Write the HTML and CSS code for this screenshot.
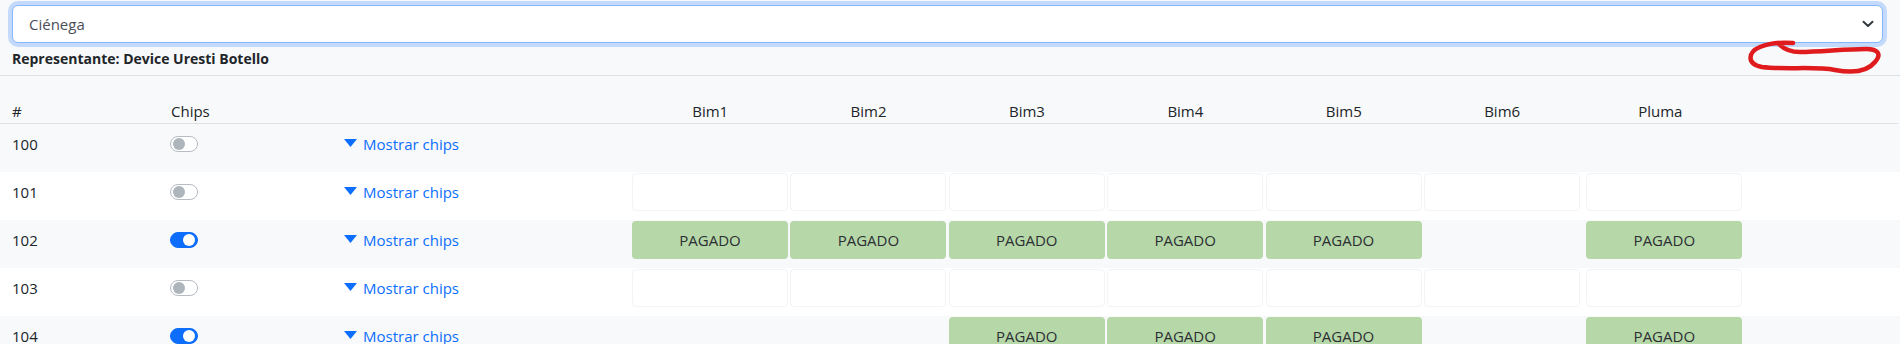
FILE: index.html
```html
<!DOCTYPE html>
<html lang="es">
<head>
<meta charset="utf-8">
<title>Chips</title>
<link rel="stylesheet" href="styles.css">
</head>
<body>
<div class="page">
  <div class="top">
    <div class="select">
      <span class="select-text">Ciénega</span>
      <svg class="chevron" width="12" height="8" viewBox="0 0 12 8"><path d="M1.5 1.8 L6 6 L10.5 1.8" fill="none" stroke="#343a40" stroke-width="2" stroke-linecap="round" stroke-linejoin="round"/></svg>
    </div>
    <div class="rep">Representante: Device Uresti Botello</div>
  </div>

  <div class="table">
    <div class="row head">
      <div class="c-num">#</div>
      <div class="c-chips">Chips</div>
      <div class="c-show"></div>
      <div class="c-bim">Bim1</div>
      <div class="c-bim">Bim2</div>
      <div class="c-bim">Bim3</div>
      <div class="c-bim">Bim4</div>
      <div class="c-bim">Bim5</div>
      <div class="c-bim">Bim6</div>
      <div class="c-pluma">Pluma</div>
    </div>

    <div class="row striped">
      <div class="c-num">100</div>
      <div class="c-chips"><span class="switch"></span></div>
      <div class="c-show"><span class="link"><svg class="caret" width="13" height="8" viewBox="0 0 13 8"><path d="M0 0 H13 L6.5 8 Z" fill="#0d6efd"/></svg>Mostrar chips</span></div>
    </div>

    <div class="row">
      <div class="c-num">101</div>
      <div class="c-chips"><span class="switch"></span></div>
      <div class="c-show"><span class="link"><svg class="caret" width="13" height="8" viewBox="0 0 13 8"><path d="M0 0 H13 L6.5 8 Z" fill="#0d6efd"/></svg>Mostrar chips</span></div>
      <div class="c-bim"><div class="cell empty"></div></div>
      <div class="c-bim"><div class="cell empty"></div></div>
      <div class="c-bim"><div class="cell empty"></div></div>
      <div class="c-bim"><div class="cell empty"></div></div>
      <div class="c-bim"><div class="cell empty"></div></div>
      <div class="c-bim"><div class="cell empty"></div></div>
      <div class="c-pluma"><div class="cell empty"></div></div>
    </div>

    <div class="row striped">
      <div class="c-num">102</div>
      <div class="c-chips"><span class="switch on"></span></div>
      <div class="c-show"><span class="link"><svg class="caret" width="13" height="8" viewBox="0 0 13 8"><path d="M0 0 H13 L6.5 8 Z" fill="#0d6efd"/></svg>Mostrar chips</span></div>
      <div class="c-bim"><div class="cell paid">PAGADO</div></div>
      <div class="c-bim"><div class="cell paid">PAGADO</div></div>
      <div class="c-bim"><div class="cell paid">PAGADO</div></div>
      <div class="c-bim"><div class="cell paid">PAGADO</div></div>
      <div class="c-bim"><div class="cell paid">PAGADO</div></div>
      <div class="c-bim"></div>
      <div class="c-pluma"><div class="cell paid">PAGADO</div></div>
    </div>

    <div class="row">
      <div class="c-num">103</div>
      <div class="c-chips"><span class="switch"></span></div>
      <div class="c-show"><span class="link"><svg class="caret" width="13" height="8" viewBox="0 0 13 8"><path d="M0 0 H13 L6.5 8 Z" fill="#0d6efd"/></svg>Mostrar chips</span></div>
      <div class="c-bim"><div class="cell empty"></div></div>
      <div class="c-bim"><div class="cell empty"></div></div>
      <div class="c-bim"><div class="cell empty"></div></div>
      <div class="c-bim"><div class="cell empty"></div></div>
      <div class="c-bim"><div class="cell empty"></div></div>
      <div class="c-bim"><div class="cell empty"></div></div>
      <div class="c-pluma"><div class="cell empty"></div></div>
    </div>

    <div class="row striped">
      <div class="c-num">104</div>
      <div class="c-chips"><span class="switch on"></span></div>
      <div class="c-show"><span class="link"><svg class="caret" width="13" height="8" viewBox="0 0 13 8"><path d="M0 0 H13 L6.5 8 Z" fill="#0d6efd"/></svg>Mostrar chips</span></div>
      <div class="c-bim"></div>
      <div class="c-bim"></div>
      <div class="c-bim"><div class="cell paid">PAGADO</div></div>
      <div class="c-bim"><div class="cell paid">PAGADO</div></div>
      <div class="c-bim"><div class="cell paid">PAGADO</div></div>
      <div class="c-bim"></div>
      <div class="c-pluma"><div class="cell paid">PAGADO</div></div>
    </div>
  </div>

  <svg class="scribble" width="1900" height="344" viewBox="0 0 1900 344">
    <path d="M1793 43 C1781 42 1770 43 1760 47 C1748 52 1746 64 1762 67 C1786 70 1815 66 1835 70 C1851 73 1867 72 1875 62 C1882 54 1878 49 1866 49 C1845 49 1820 52 1800 52 C1790 52 1784 49 1779 44" fill="none" stroke="#e01b1e" stroke-width="4.5" stroke-linecap="round" stroke-linejoin="round"/>
  </svg>
</div>
</body>
</html>
```

FILE: styles.css
```css
* { box-sizing: border-box; }

html, body {
  margin: 0;
  padding: 0;
  background: #f8f9fa;
}

body {
  font-family: "Open Sans", "Noto Sans", sans-serif;
  font-size: 15px;
  line-height: 24px;
  color: #212529;
}

.page {
  position: relative;
  width: 1900px;
  height: 344px;
  overflow: hidden;
}

.top {
  padding: 5px 17px 0 12px;
  border-bottom: 1px solid #dee2e6;
}

.select {
  height: 38px;
  display: flex;
  align-items: center;
  justify-content: space-between;
  padding: 0 8px 0 16px;
  background: #fff;
  border: 1px solid #86b7fe;
  border-radius: 6px;
  box-shadow: 0 0 0 4px rgba(13, 110, 253, 0.22);
}

.select-text {
  color: #495057;
}

.chevron {
  display: block;
}

.rep {
  margin-top: 4px;
  padding-bottom: 4px;
  font-weight: 700;
  font-size: 14px;
}

.row {
  display: grid;
  grid-template-columns: 170px 174px 287px repeat(6, 158.4px) 168px 1fr;
  height: 48px;
  align-items: start;
  background: #fff;
}

.row.striped {
  background: #f8f9fa;
}

.row.head {
  background: #f8f9fa;
  align-items: end;
  border-bottom: 1px solid #dee2e6;
  height: 48px;
  margin-right: 2px;
}

.c-num {
  padding: 8px 0 0 12px;
}

.row.head > div {
  padding-top: 0;
  padding-bottom: 0;
}

.c-chips {
  padding-top: 8px;
}

.row.head .c-chips {
  padding-left: 1px;
}

.c-show {
  padding-top: 8px;
}

.c-bim {
  text-align: center;
}

.c-pluma {
  text-align: center;
}

.row.head .c-pluma {
  width: 158px;
}

.switch {
  display: block;
  position: relative;
  width: 28px;
  height: 16px;
  margin-top: 4px;
  border: 1px solid #b6bcc2;
  border-radius: 8px;
  background: #fff;
}

.switch::after {
  content: "";
  position: absolute;
  top: 1px;
  left: 2px;
  width: 12px;
  height: 12px;
  border-radius: 50%;
  background: #adb5bd;
}

.switch.on {
  background: #0d6efd;
  border-color: #0d6efd;
}

.switch.on::after {
  left: auto;
  right: 2px;
  background: #fff;
}

.link {
  display: flex;
  align-items: center;
  gap: 6px;
  height: 24px;
  color: #0d6efd;
}

.caret {
  display: block;
  margin-top: -2px;
}

.cell {
  margin: 1px 1px 0 1px;
  width: 156px;
  height: 38px;
  border-radius: 4px;
  display: flex;
  align-items: center;
  justify-content: center;
}

.c-pluma .cell {
  margin-left: 5px;
}

.cell.empty {
  background: #fff;
  border: 1px solid #f4f4f5;
}

.cell.paid {
  background: #b6d7a8;
  color: #2b2f33;
}

.scribble {
  position: absolute;
  top: 0;
  left: 0;
  pointer-events: none;
}
```
